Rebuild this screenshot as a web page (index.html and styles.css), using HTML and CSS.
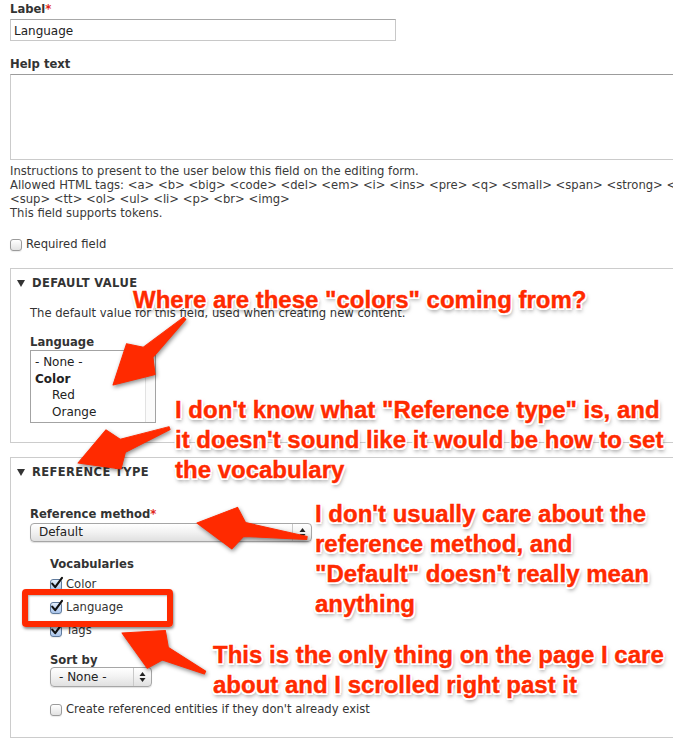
FILE: index.html
```html
<!DOCTYPE html>
<html>
<head>
<meta charset="utf-8">
<link rel="stylesheet" href="styles.css">
</head>
<body>
<div class="page">
  <div class="lbl">Label<span class="req">*</span></div>
  <div class="text-input">Language</div>
  <div class="lbl lbl-help">Help text</div>
  <div class="textarea"></div>
  <div class="desc">
    <div>Instructions to present to the user below this field on the editing form.</div>
    <div class="nowrap">Allowed HTML tags: &lt;a&gt; &lt;b&gt; &lt;big&gt; &lt;code&gt; &lt;del&gt; &lt;em&gt; &lt;i&gt; &lt;ins&gt; &lt;pre&gt; &lt;q&gt; &lt;small&gt; &lt;span&gt; &lt;strong&gt; &lt;sub&gt;</div>
    <div>&lt;sup&gt; &lt;tt&gt; &lt;ol&gt; &lt;ul&gt; &lt;li&gt; &lt;p&gt; &lt;br&gt; &lt;img&gt;</div>
    <div>This field supports tokens.</div>
  </div>
  <div class="check-row row-required"><span class="cb"></span><span>Required field</span></div>

  <div class="fs fs-default">
    <div class="legend"><svg class="tri" width="8" height="7" viewBox="0 0 8 7"><polygon points="0,0 8,0 4,7"/></svg><span>DEFAULT VALUE</span></div>
    <div class="fs-body">
      <div class="fs-desc">The default value for this field, used when creating new content.</div>
      <div class="lbl lbl-lang">Language</div>
      <div class="listbox">
        <div class="opts">
          <div>- None -</div>
          <div class="grp">Color</div>
          <div class="sub">Red</div>
          <div class="sub">Orange</div>
        </div>
        <div class="sb"><div class="thumb"></div></div>
      </div>
    </div>
  </div>

  <div class="fs fs-ref">
    <div class="legend"><svg class="tri" width="8" height="7" viewBox="0 0 8 7"><polygon points="0,0 8,0 4,7"/></svg><span>REFERENCE TYPE</span></div>
    <div class="fs-body">
      <div class="lbl lbl-method">Reference method<span class="req">*</span></div>
      <div class="select select-method">
        <span class="sel-text">Default</span>
        <span class="sel-arrows"><svg width="7" height="12" viewBox="0 0 7 12"><polygon points="0.5,5 3.5,1 6.5,5"/><polygon points="0.5,7 3.5,11 6.5,7"/></svg></span>
      </div>
      <div class="sub-block">
        <div class="lbl lbl-vocab">Vocabularies</div>
        <div class="check-row vrow first"><span class="cb on"><svg width="14" height="14" viewBox="0 0 14 14"><path d="M2.2 6.6 L5.2 10.2 L12 0.8"/></svg></span><span>Color</span></div>
        <div class="check-row vrow"><span class="cb on"><svg width="14" height="14" viewBox="0 0 14 14"><path d="M2.2 6.6 L5.2 10.2 L12 0.8"/></svg></span><span>Language</span></div>
        <div class="check-row vrow"><span class="cb on"><svg width="14" height="14" viewBox="0 0 14 14"><path d="M2.2 6.6 L5.2 10.2 L12 0.8"/></svg></span><span>Tags</span></div>
        <div class="lbl lbl-sort">Sort by</div>
        <div class="select select-sort">
          <span class="sel-text">- None -</span>
          <span class="sel-arrows"><svg width="7" height="12" viewBox="0 0 7 12"><polygon points="0.5,5 3.5,1 6.5,5"/><polygon points="0.5,7 3.5,11 6.5,7"/></svg></span>
        </div>
        <div class="check-row row-create"><span class="cb"></span><span>Create referenced entities if they don't already exist</span></div>
      </div>
    </div>
  </div>

  <div class="redbox"></div>
  <svg class="arrows" width="673" height="744" viewBox="0 0 673 744">
    <g transform="translate(113 385) rotate(-42.9)"><polygon points="0,0 38,-21 48,-7 98,-1.5 98,1.5 48,7 38,21"/></g>
    <g transform="translate(78 463) rotate(-20.9)"><polygon points="0,0 38,-21 48,-7 98,-1.5 98,1.5 48,7 38,21"/></g>
    <g transform="translate(197 523) rotate(7.8)"><polygon points="0,0 38,-21 48,-7 111,-1.5 111,1.5 48,7 38,21"/></g>
    <g transform="translate(122 633) rotate(25.5)"><polygon points="0,0 38,-21 48,-7 92,-1.5 92,1.5 48,7 38,21"/></g>
  </svg>
  <div class="note n1">Where are these "colors" coming from?</div>
  <div class="note n2">I don't know what "Reference type" is, and<br>it doesn't sound like it would be how to set<br>the vocabulary</div>
  <div class="note n3">I don't usually care about the<br>reference method, and<br>"Default" doesn't really mean<br>anything</div>
  <div class="note n4">This is the only thing on the page I care<br>about and I scrolled right past it</div>
</div>
</body>
</html>
```

FILE: styles.css
```css
html, body {
  margin: 0;
  padding: 0;
  overflow: hidden;
  background: #fff;
}
body {
  font-family: "DejaVu Sans", sans-serif;
  font-size: 11.6px;
  line-height: 14px;
  color: #333;
}
.page {
  position: relative;
  width: 760px;
  height: 744px;
  box-sizing: border-box;
  padding: 2px 0 0 10px;
}
.lbl { font-weight: bold; }
.req { color: #e0261b; }
.text-input {
  margin-top: 3px;
  width: 386px;
  height: 22px;
  box-sizing: border-box;
  border: 1px solid #c8c8c8;
  border-top-color: #a8a8a8;
  padding: 1px 0 0 3px;
  font-size: 12px;
  line-height: 20px;
  color: #222;
}
.lbl-help { margin-top: 16px; }
.textarea {
  margin-top: 3px;
  width: 730px;
  height: 86px;
  box-sizing: border-box;
  border: 1px solid #cbcbcb;
  border-top-color: #9c9c9c;
}
.desc { margin-top: 4px; color: #3a3a3a; }
.nowrap { white-space: nowrap; }
.check-row {
  display: flex;
  align-items: flex-start;
  gap: 4px;
  white-space: nowrap;
}
.row-required { margin-top: 17px; }
.cb {
  position: relative;
  flex: none;
  width: 12px;
  height: 12px;
  margin-top: 2px;
  box-sizing: border-box;
  border: 1px solid #9b9b9b;
  border-radius: 3px;
  background: linear-gradient(#ffffff, #e2e2e2);
  box-shadow: 0 1px 1px rgba(0,0,0,0.08);
}
.cb.on {
  border-color: #5f7a9c;
  background: linear-gradient(#e3eefc, #a9c4ea);
}
.cb svg {
  position: absolute;
  left: -1px;
  top: -3px;
  overflow: visible;
}
.cb svg path {
  fill: none;
  stroke: #111;
  stroke-width: 2.1;
  stroke-linecap: round;
  stroke-linejoin: round;
}
.fs {
  width: 730px;
  box-sizing: border-box;
  border: 1px solid #cccccc;
}
.fs-default { margin-top: 17px; padding: 7px 0 19px; }
.fs-ref { margin-top: 14px; padding: 7px 0 21px; }
.legend {
  display: flex;
  align-items: center;
  gap: 7px;
  padding-left: 6px;
  font-weight: bold;
  font-size: 11.5px;
  letter-spacing: 0.4px;
  color: #333;
}
.tri { flex: none; fill: #333; }
.fs-body { padding-left: 19px; }
.fs-desc { margin-top: 16px; }
.lbl-lang { margin-top: 15px; }
.listbox {
  margin-top: 1px;
  width: 126px;
  height: 73px;
  box-sizing: border-box;
  border: 1px solid #a3a3a3;
  display: flex;
  overflow: hidden;
}
.opts {
  flex: 1;
  padding: 3px 0 0 4px;
  font-size: 12px;
  line-height: 16.6px;
  color: #222;
  white-space: nowrap;
}
.grp { font-weight: bold; }
.sub { padding-left: 17px; }
.sb {
  width: 9px;
  flex: none;
  border-left: 1px solid #e2e2e2;
  background: #fbfbfb;
}
.thumb {
  width: 6px;
  height: 10px;
  margin: 6px auto 0;
  border-radius: 3px;
  background: #cdcdcd;
}
.lbl-method { margin-top: 28px; }
.select {
  display: flex;
  box-sizing: border-box;
  border: 1px solid #a6a6a6;
  border-radius: 4px;
  background: linear-gradient(#ffffff, #f3f3f3 45%, #e0e0e0);
  box-shadow: 0 1px 1px rgba(0,0,0,0.12);
  font-size: 12px;
  color: #222;
  overflow: hidden;
}
.sel-text { flex: 1; padding-left: 8px; white-space: nowrap; }
.sel-arrows {
  flex: none;
  display: flex;
  align-items: center;
  justify-content: center;
  border-left: 1px solid #c9c9c9;
}
.sel-arrows svg { fill: #222; }
.select-method {
  margin-top: 2px;
  width: 282px;
  height: 19px;
  line-height: 17px;
}
.select-method .sel-arrows { width: 18px; }
.sub-block { padding-left: 20px; }
.lbl-vocab { margin-top: 15px; }
.vrow { margin-top: 9px; }
.vrow.first { margin-top: 6px; }
.lbl-sort { margin-top: 16px; }
.select-sort {
  width: 102px;
  height: 20px;
  line-height: 18px;
}
.select-sort .sel-arrows { width: 17px; }
.row-create { margin-top: 15px; }

.redbox {
  position: absolute;
  left: 22px;
  top: 589px;
  width: 151px;
  height: 38px;
  box-sizing: border-box;
  border: 6px solid #ff2a00;
  border-radius: 4px;
  box-shadow: 1px 2px 3px rgba(0,0,0,0.45), inset 1px 1px 2px rgba(0,0,0,0.3);
}
.arrows {
  position: absolute;
  left: 0;
  top: 0;
  fill: #ff2a00;
  stroke: #ff2a00;
  stroke-width: 1;
  stroke-linejoin: round;
  filter: drop-shadow(1px 2px 2px rgba(0,0,0,0.45));
}
.note {
  position: absolute;
  font-family: "Liberation Sans", Arial, sans-serif;
  font-weight: bold;
  font-size: 24px;
  line-height: 30px;
  color: #ff2a00;
  white-space: nowrap;
  -webkit-text-stroke: 0.4px #ff2a00;
  text-shadow:
    2px 0 0 #fff, -2px 0 0 #fff, 0 2px 0 #fff, 0 -2px 0 #fff,
    1.5px 1.5px 0 #fff, -1.5px 1.5px 0 #fff, 1.5px -1.5px 0 #fff, -1.5px -1.5px 0 #fff,
    1px 3px 4px rgba(0,0,0,0.55);
}
.n1 { left: 133px; top: 285px; }
.n2 { left: 175px; top: 395px; }
.n3 { left: 315px; top: 499px; }
.n4 { left: 213px; top: 640px; }
```
